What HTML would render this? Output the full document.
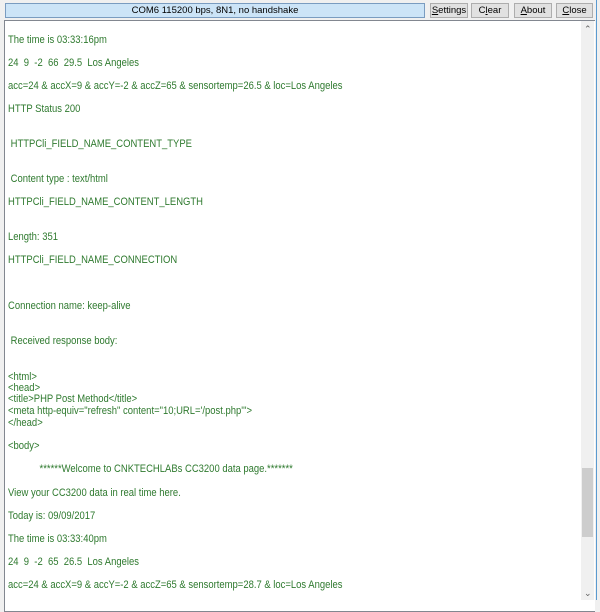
<!DOCTYPE html>
<html><head><style>
body{margin:0;width:600px;height:600px;overflow:hidden;background:#f0f0f0;font-family:"Liberation Sans",Arial,sans-serif;position:relative}
.st{position:absolute;left:5px;top:3px;width:418px;height:13px;background:#cce4f7;border:1px solid #7a9cc0;font-size:9.5px;text-align:center;line-height:13px;color:#000}
.b{position:absolute;top:3px;height:13px;background:#e1e1e1;border:1px solid #adadad;font-size:9.5px;text-align:center;line-height:13px;color:#000}
.ta{position:absolute;left:4px;top:20px;width:590px;height:590px;background:#fff;border:1px solid #828790;border-right:none}
.l{position:absolute;left:8px;font-size:11px;color:#2f7a2f;white-space:pre;transform:scaleX(0.86);transform-origin:0 0}
.sb{position:absolute;left:581px;top:21px;width:13px;height:579px;background:#f0f0f0}
.th{position:absolute;left:582px;top:468px;width:11px;height:69px;background:#cdcdcd}
.edge{position:absolute;left:596px;top:0;width:4px;height:600px;background:#f0f0f0;border-left:1px solid #5a9ad0}
</style></head><body>
<div class="st">COM6 115200 bps, 8N1, no handshake</div>
<div class="b" style="left:430px;width:36px"><u>S</u>ettings</div>
<div class="b" style="left:471px;width:36px">C<u>l</u>ear</div>
<div class="b" style="left:514px;width:36px"><u>A</u>bout</div>
<div class="b" style="left:556px;width:35px"><u>C</u>lose</div>
<div class="ta"></div>
<div class="sb"></div><div class="th"></div>
<div style="position:absolute;left:584px;top:24px;font-size:9px;color:#606060">&#8963;</div>
<div style="position:absolute;left:584px;top:588px;font-size:9px;color:#606060">&#8964;</div>
<div class="edge"></div>
<div class="l" style="top:34px">The time is 03:33:16pm</div>
<div class="l" style="top:57px">24  9  -2  66  29.5  Los Angeles</div>
<div class="l" style="top:80px">acc=24 &amp; accX=9 &amp; accY=-2 &amp; accZ=65 &amp; sensortemp=26.5 &amp; loc=Los Angeles</div>
<div class="l" style="top:103px">HTTP Status 200</div>
<div class="l" style="top:138px"> HTTPCli_FIELD_NAME_CONTENT_TYPE</div>
<div class="l" style="top:173px"> Content type : text/html</div>
<div class="l" style="top:196px">HTTPCli_FIELD_NAME_CONTENT_LENGTH</div>
<div class="l" style="top:231px">Length: 351</div>
<div class="l" style="top:254px">HTTPCli_FIELD_NAME_CONNECTION</div>
<div class="l" style="top:300px">Connection name: keep-alive</div>
<div class="l" style="top:335px"> Received response body:</div>
<div class="l" style="top:371px">&lt;html&gt;</div>
<div class="l" style="top:382px">&lt;head&gt;</div>
<div class="l" style="top:393px">&lt;title&gt;PHP Post Method&lt;/title&gt;</div>
<div class="l" style="top:405px">&lt;meta http-equiv="refresh" content="10;URL='/post.php'"&gt;</div>
<div class="l" style="top:417px">&lt;/head&gt;</div>
<div class="l" style="top:440px">&lt;body&gt;</div>
<div class="l" style="top:463px">            ******Welcome to CNKTECHLABs CC3200 data page.*******</div>
<div class="l" style="top:487px">View your CC3200 data in real time here.</div>
<div class="l" style="top:510px">Today is: 09/09/2017</div>
<div class="l" style="top:533px">The time is 03:33:40pm</div>
<div class="l" style="top:556px">24  9  -2  65  26.5  Los Angeles</div>
<div class="l" style="top:579px">acc=24 &amp; accX=9 &amp; accY=-2 &amp; accZ=65 &amp; sensortemp=28.7 &amp; loc=Los Angeles</div>
</body></html>
